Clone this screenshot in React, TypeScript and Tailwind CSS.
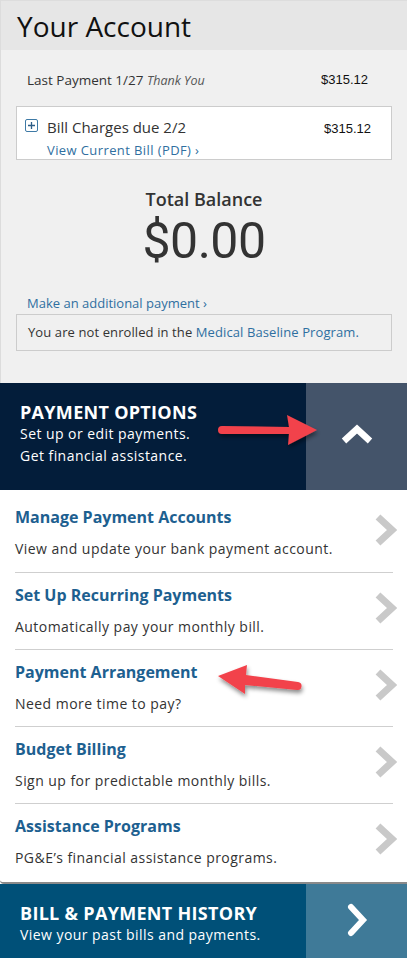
import React from "react";

const font = { fontFamily: '"Open Sans", "Noto Sans", sans-serif' };

function GreyChevron() {
  return (
    <svg width="22" height="32" viewBox="0 0 22 32" className="shrink-0">
      <polyline points="3,3 17,16 3,29" fill="none" stroke="#c9c9c9" strokeWidth="7" strokeLinejoin="miter" />
    </svg>
  );
}

const items = [
  { t: "Manage Payment Accounts", d: "View and update your bank payment account." },
  { t: "Set Up Recurring Payments", d: "Automatically pay your monthly bill." },
  { t: "Payment Arrangement", d: "Need more time to pay?" },
  { t: "Budget Billing", d: "Sign up for predictable monthly bills." },
  { t: "Assistance Programs", d: "PG&E\u2019s financial assistance programs." },
];

export default function App() {
  return (
    <div className="relative w-[407px] h-[958px] overflow-hidden bg-white" style={font}>
      {/* Your Account card */}
      <div className="bg-[#f0f0f0] border-l border-[#dcdcdc] h-[383px]">
        <div className="h-[50px] bg-[#e6e6e6] border-t border-[#dddddd] flex items-center pl-4">
          <span className="text-[28px] leading-none text-[#111]">Your Account</span>
        </div>
        <div className="px-[15px]">
          <div className="mt-[16px] h-[28px] flex items-center justify-between pl-[11px] pr-[24px]">
            <span className="text-[13.5px] text-[#333]">
              Last Payment 1/27 <i className="text-[12.5px] text-[#555]">Thank You</i>
            </span>
            <span className="text-[13px] text-[#111]" style={{ fontFamily: '"Liberation Sans", Arial, sans-serif' }}>$315.12</span>
          </div>
          <div className="mt-[12px] h-[54px] bg-white border border-[#cccccc] flex justify-between pl-[8px] pr-[20px]">
            <div className="flex gap-[9px] pt-[11px]">
              <div className="w-[13px] h-[13px] border border-[#3e7aa6] rounded-[2px] flex items-center justify-center mt-[1px]">
                <svg width="9" height="9" viewBox="0 0 9 9">
                  <path d="M4.5 1v7M1 4.5h7" stroke="#2f5f88" strokeWidth="1.3" />
                </svg>
              </div>
              <div className="flex flex-col">
                <span className="text-[15px] leading-[19px] text-[#333]">Bill Charges due 2/2</span>
                <span className="text-[13px] leading-[18px] mt-[4px] text-[#2f6fa0] tracking-[0.4px]">View Current Bill (PDF) &#8250;</span>
              </div>
            </div>
            <span className="text-[13px] text-[#111] mt-[12px]" style={{ fontFamily: '"Liberation Sans", Arial, sans-serif' }}>$315.12</span>
          </div>
          <div className="mt-[29px] flex flex-col items-center">
            <span className="text-[18px] leading-[20px] font-semibold text-[#333]">Total Balance</span>
            <span
              className="mt-[2px] text-[50px] leading-[60px] text-[#333] tracking-[-0.5px]"
              style={{ fontFamily: 'Roboto, "Open Sans", sans-serif' }}
            >
              $0.00
            </span>
          </div>
          <div className="mt-[23px] pl-[11px] text-[13px] leading-[18px] text-[#2f6fa0]">Make an additional payment &#8250;</div>
          <div className="mt-[2px] h-[37px] border border-[#cccccc] flex items-center pl-[11px] text-[13px] text-[#333] tracking-[0.1px]">
            You are not enrolled in the&nbsp;<span className="text-[#2f6fa0]">Medical Baseline Program.</span>
          </div>
        </div>
      </div>

      {/* Payment options header */}
      <div className="h-[107px] flex bg-[#031d3a]">
        <div className="flex-1 pl-[20px] pt-[18px] text-white">
          <div className="text-[18px] leading-[22px] font-bold tracking-[0.3px]">PAYMENT OPTIONS</div>
          <div className="text-[14px] leading-[22px] tracking-[0.45px]">Set up or edit payments.</div>
          <div className="text-[14px] leading-[22px] tracking-[0.45px]">Get financial assistance.</div>
        </div>
        <div className="w-[101px] bg-[#44546a] flex items-center justify-center">
          <svg width="34" height="24" viewBox="0 0 34 24" className="-mt-[6px]">
            <polyline points="4,19 17,7 30,19" fill="none" stroke="white" strokeWidth="6.5" strokeLinejoin="miter" />
          </svg>
        </div>
      </div>

      {/* List */}
      <div className="bg-white pt-[5px] pl-[15px] pr-[10px] h-[394px] rounded-bl-[4px] border-b-2 border-[#8a8a8a]">
        {items.map((it, i) => (
          <div key={i} className={`flex justify-between ${i > 0 ? "border-t border-[#cfcfcf]" : ""} h-[77px] mr-[4px]`}>
            <div className="pt-[11px]">
              <div className="text-[16px] leading-[22px] font-bold text-[#1d6090]">{it.t}</div>
              <div className="mt-[10px] text-[14px] leading-[22px] text-[#333] tracking-[0.45px]">{it.d}</div>
            </div>
            <div className="pt-[19px] -mr-[4px]">
              <GreyChevron />
            </div>
          </div>
        ))}
      </div>

      {/* Bill & payment history */}
      <div className="h-[74px] flex bg-[#005078]">
        <div className="flex-1 pl-[20px] pt-[18px] text-white">
          <div className="text-[18px] leading-[22px] font-bold tracking-[0.3px]">BILL &amp; PAYMENT HISTORY</div>
          <div className="text-[14px] leading-[22px] tracking-[0.45px]">View your past bills and payments.</div>
        </div>
        <div className="w-[101px] bg-[#3f7a98] flex items-center justify-center">
          <svg width="24" height="34" viewBox="0 0 24 34" className="-mt-[2px]">
            <polyline points="6,4 18,17 6,30" fill="none" stroke="white" strokeWidth="6" strokeLinecap="round" strokeLinejoin="miter" />
          </svg>
        </div>
      </div>

      {/* Annotation arrows */}
      <svg className="absolute left-0 top-0 pointer-events-none" width="407" height="958" viewBox="0 0 407 958">
        <defs>
          <filter id="sh" x="-20%" y="-50%" width="140%" height="200%">
            <feDropShadow dx="1" dy="3" stdDeviation="2" floodColor="#000" floodOpacity="0.45" />
          </filter>
        </defs>
        <g filter="url(#sh)" fill="#f2434b">
          <path d="M222 426 L289 427 L287 415 L317 430 L288 445 L289 434 L222 434 A4 4 0 0 1 222 426 Z" />
          <path d="M218 676 L247 665 L246 675 L298 682 A4 4 0 0 1 297 690 L245 685 L245 694 Z" />
        </g>
      </svg>
    </div>
  );
}
